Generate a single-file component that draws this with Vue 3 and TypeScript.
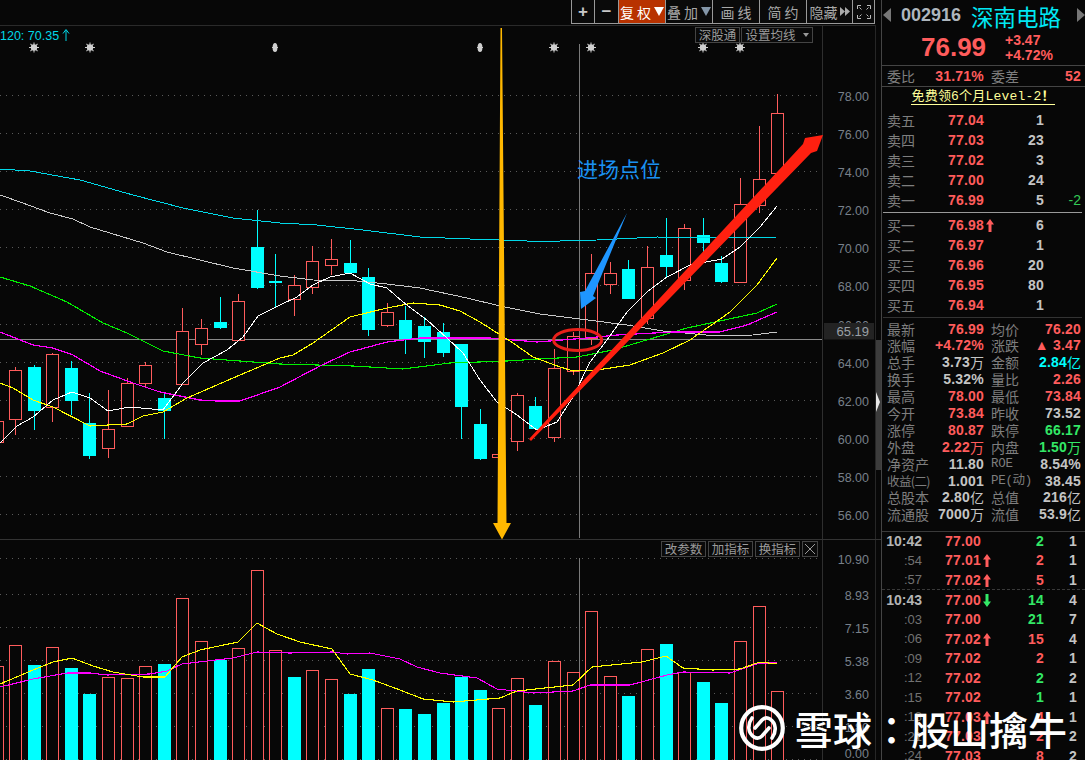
<script setup lang="ts">
type Candle = [number, number, number, number, number, number];
type Bar = [number, number, number];

const candles: Candle[] = [
  [-2.5, 421, 442, 415, 450, 1], [15.5, 370, 419, 367, 435, 1], [34.5, 367, 411, 365, 430, 0],
  [52.5, 354, 407, 353, 422, 1], [71.5, 368, 401, 361, 415, 0], [89.5, 423, 456, 393, 459, 0],
  [108.5, 429, 448, 390, 458, 1], [127.5, 383, 426, 378, 426, 1], [145.5, 365, 383, 362, 388, 1],
  [164.5, 398, 411, 392, 439, 0], [182.5, 331, 384, 308, 384, 1], [201.5, 328, 344, 319, 355, 1],
  [220.5, 322, 328, 297, 329, 0], [238.5, 301, 340, 294, 340, 1], [257.5, 247, 288, 210, 289, 0],
  [275.5, 281, 283, 254, 307, 0], [294.5, 285, 299, 275, 316, 1], [312.5, 261, 287, 246, 294, 1],
  [331.5, 259, 265, 239, 275, 1], [350.5, 263, 273, 240, 273, 0], [368.5, 277, 330, 268, 336, 0],
  [387.5, 312, 325, 303, 327, 1], [405.5, 320, 339, 306, 354, 0], [424.5, 326, 342, 317, 358, 0],
  [443.5, 332, 353, 323, 357, 0], [461.5, 344, 407, 344, 439, 0], [480.5, 424, 459, 409, 460, 0],
  [498.5, 454, 457, 454, 457, 1], [517.5, 395, 441, 393, 451, 1], [535.5, 406, 429, 397, 429, 0],
  [554.5, 368, 437, 349, 442, 1], [573.5, 336, 371, 332, 375, 1], [591.5, 273, 338, 254, 345, 1],
  [610.5, 273, 284, 262, 294, 1], [628.5, 269, 299, 260, 299, 0], [647.5, 267, 318, 246, 324, 1],
  [666.5, 255, 267, 218, 277, 0], [684.5, 228, 280, 224, 290, 1], [703.5, 235, 243, 218, 253, 0],
  [721.5, 263, 282, 256, 283, 0], [740.5, 204, 282, 178, 282, 1], [759.5, 179, 205, 126, 213, 1],
  [777.5, 113, 173, 94, 173, 1],
];

const bars: Bar[] = [
  [-2.5, 666, 1], [15.5, 645, 1], [34.5, 665, 0], [52.5, 647, 1], [71.5, 668, 0], [89.5, 694, 0],
  [108.5, 677, 1], [127.5, 678, 1], [145.5, 666, 1], [164.5, 664, 0], [182.5, 598, 1], [201.5, 641, 1],
  [220.5, 660, 0], [238.5, 648, 1], [257.5, 570, 1], [275.5, 650, 1], [294.5, 677, 0], [312.5, 670, 1],
  [331.5, 679, 1], [350.5, 694, 0], [368.5, 669, 0], [387.5, 708, 1], [405.5, 709, 0], [424.5, 714, 0],
  [443.5, 703, 0], [461.5, 677, 0], [480.5, 690, 0], [498.5, 708, 1], [517.5, 678, 1], [535.5, 705, 0],
  [554.5, 661, 1], [573.5, 672, 1], [591.5, 611, 1], [610.5, 676, 1], [628.5, 696, 0], [647.5, 649, 1],
  [666.5, 644, 0], [684.5, 672, 1], [703.5, 682, 0], [721.5, 703, 0], [740.5, 641, 1], [759.5, 606, 1],
  [777.5, 691, 1],
];

const mainLines = [
  { color: '#00d8e8', w: 1, pts: '0,169 30,171 80,180 133,195 183,208 233,218 280,223 317,225 363,230 420,237 470,239 527,241 560,241 597,240 657,237 717,238 777,237' },
  { color: '#c8c8c8', w: 1, pts: '0,195 20,202 50,213 73,219 90,227 143,243 167,252 200,260 233,268 280,276 313,280 357,281 387,284 420,288 467,298 500,306 540,314 580,319 627,325 663,331 717,336 753,335 777,332' },
  { color: '#00f000', w: 1.1, pts: '0,277 30,286 67,302 103,323 127,333 163,351 200,358 280,364 353,366 403,369 450,363 507,361 540,359 577,357 613,350 687,328 757,313 777,304' },
  { color: '#ff00ff', w: 1.2, pts: '0,332 33,345 53,348 73,355 100,371 133,383 160,392 200,400 217,401 240,401 280,387 320,366 350,352 387,342 420,338 490,338 537,342 587,338 617,335 673,332 720,332 747,325 777,312' },
  { color: '#ffff00', w: 1.1, pts: '0,383 13,388 33,400 53,407 90,426 127,424 143,416 163,412 187,398 233,378 280,358 293,355 313,343 350,317 387,308 413,303 440,305 460,311 480,322 513,343 533,357 560,367 573,371 597,370 630,365 663,353 690,340 730,312 757,285 777,258' },
  { color: '#ffffff', w: 1, pts: '0,443 17,426 33,417 53,400 72,392 90,398 108,411 130,407 163,410 183,383 203,363 227,350 243,337 258,316 280,305 297,297 313,285 330,277 350,273 370,284 387,288 403,302 427,320 447,338 463,353 480,380 497,402 517,415 537,430 557,422 573,397 590,362 607,340 627,312 647,292 667,277 690,265 722,259 740,247 760,227 777,206' },
];

const volLines = [
  { color: '#ff00ff', pts: '0,687 33,679 67,673 90,673 107,675 150,674 167,671 182,664 207,661 233,658 257,652 290,653 333,652 347,654 370,653 400,659 417,667 440,673 477,678 497,689 533,693 573,691 590,685 630,685 667,675 683,672 730,673 760,663 777,663' },
  { color: '#ffff00', pts: '0,684 33,670 53,662 72,658 93,666 113,672 143,677 165,677 182,657 200,650 238,642 257,623 277,634 300,642 332,649 350,674 373,680 400,690 423,699 453,702 500,698 517,691 573,685 592,667 642,662 666,656 683,668 713,670 740,669 760,662 777,664' },
];

const mainGrid = [95, 133, 171, 209, 247, 285, 324, 362, 400, 438, 476, 514];
const mainLabels: [string, number][] = [
  ['78.00', 97], ['76.00', 135], ['74.00', 173], ['72.00', 211], ['70.00', 249], ['68.00', 287],
  ['66.00', 326], ['64.00', 364], ['62.00', 402], ['60.00', 440], ['58.00', 478], ['56.00', 516],
];
const volGrid = [558, 594, 627, 660, 693, 726, 759];
const volLabels: [string, number][] = [
  ['10.90', 560], ['8.93', 596], ['7.15', 629], ['5.38', 662], ['3.60', 695], ['1.80', 728], ['0.00', 754],
];
const stars: [number, boolean][] = [[34, false], [90, false], [275, true], [480, true], [554, false], [591, false], [703, false], [740, false]];
const rays = [0, 45, 90, 135, 180, 225, 270, 315];

const sells = [
  { l: '卖五', p: '77.04', v: '1' }, { l: '卖四', p: '77.03', v: '23' }, { l: '卖三', p: '77.02', v: '3' },
  { l: '卖二', p: '77.00', v: '24' }, { l: '卖一', p: '76.99', v: '5', d: '-2' },
];
const buys = [
  { l: '买一', p: '76.98', v: '6', up: true }, { l: '买二', p: '76.97', v: '1' }, { l: '买三', p: '76.96', v: '20' },
  { l: '买四', p: '76.95', v: '80' }, { l: '买五', p: '76.94', v: '1' },
];
type Cell = { l: string; v: string; u?: string; c: string; latin?: boolean; tight?: boolean };
const stats: [Cell, Cell][] = [
  [{ l: '最新', v: '76.99', c: 'r' }, { l: '均价', v: '76.20', c: 'r' }],
  [{ l: '涨幅', v: '+4.72%', c: 'r' }, { l: '涨跌', v: '▲ 3.47', c: 'r' }],
  [{ l: '总手', v: '3.73', u: '万', c: 'g' }, { l: '金额', v: '2.84', u: '亿', c: 'c' }],
  [{ l: '换手', v: '5.32%', c: 'g' }, { l: '量比', v: '2.26', c: 'r' }],
  [{ l: '最高', v: '78.00', c: 'r' }, { l: '最低', v: '73.84', c: 'r' }],
  [{ l: '今开', v: '73.84', c: 'r' }, { l: '昨收', v: '73.52', c: 'g' }],
  [{ l: '涨停', v: '80.87', c: 'r' }, { l: '跌停', v: '66.17', c: 'n' }],
  [{ l: '外盘', v: '2.22', u: '万', c: 'r' }, { l: '内盘', v: '1.50', u: '万', c: 'n' }],
  [{ l: '净资产', v: '11.80', c: 'g' }, { l: 'ROE', v: '8.54%', c: 'g', latin: true }],
  [{ l: '收益(二)', v: '1.001', c: 'g', tight: true }, { l: 'PE(动)', v: '38.45', c: 'g', latin: true }],
  [{ l: '总股本', v: '2.80', u: '亿', c: 'g' }, { l: '总值', v: '216', u: '亿', c: 'g' }],
  [{ l: '流通股', v: '7000', u: '万', c: 'g' }, { l: '流值', v: '53.9', u: '亿', c: 'g' }],
];
type Trade = { t: string; full?: boolean; p: string; a?: 'u' | 'd'; v: string; vc: string; n: string; sep?: boolean };
const trades: Trade[] = [
  { t: '10:42', full: true, p: '77.00', v: '2', vc: 'n', n: '1' },
  { t: ':54', p: '77.01', a: 'u', v: '2', vc: 'r', n: '1' },
  { t: ':57', p: '77.02', a: 'u', v: '5', vc: 'r', n: '1', sep: true },
  { t: '10:43', full: true, p: '77.00', a: 'd', v: '14', vc: 'n', n: '4' },
  { t: ':03', p: '77.00', v: '21', vc: 'n', n: '7' },
  { t: ':06', p: '77.02', a: 'u', v: '15', vc: 'r', n: '4' },
  { t: ':09', p: '77.02', v: '2', vc: 'r', n: '1' },
  { t: ':12', p: '77.02', v: '2', vc: 'n', n: '2' },
  { t: ':15', p: '77.02', v: '1', vc: 'n', n: '1' },
  { t: ':18', p: '77.03', a: 'u', v: '4', vc: 'r', n: '1' },
  { t: ':21', p: '77.03', v: '2', vc: 'r', n: '2' },
  { t: ':24', p: '77.03', v: '8', vc: 'r', n: '2' },
];
</script>

<template>
  <div class="screen">
    <section class="charts">
      <header class="toolbar">
        <div class="tools">
          <button class="tool w22 sym">+</button>
          <button class="tool w23 sym">−</button>
          <button class="tool w46 on">复 权<i class="tri white"></i></button>
          <button class="tool w46">叠 加<i class="tri steel"></i></button>
          <button class="tool w46">画 线</button>
          <button class="tool w46">简 约</button>
          <button class="tool w45">隐藏<svg class="ff" width="10" height="9" viewBox="0 0 10 9" fill="#aaa"><path d="M0 0L5 4.5L0 9ZM5 0L10 4.5L5 9Z" /></svg></button>
          <button class="tool w22 fs">
            <svg width="14" height="14" viewBox="0 0 14 14" fill="none" stroke="#bbb" stroke-width="1">
              <path d="M.5 4V.5H4M10 .5h3.5V4M13.5 10v3.5H10M4 13.5H.5V10" />
              <path d="M2.5 2.5l2 2M11.5 2.5l-2 2M11.5 11.5l-2-2M2.5 11.5l2-2" />
            </svg>
          </button>
        </div>
      </header>

      <div class="panel main">
        <svg class="plot" width="881" height="515" viewBox="0 25 881 515">
          <g shape-rendering="crispEdges">
            <line x1="0" x2="875" y1="25.5" y2="25.5" stroke="#2a2a2a" />
            <line v-for="y in mainGrid" :key="y" x1="0" x2="826" :y1="y + 0.5" :y2="y + 0.5" stroke="#5a5a5a" stroke-dasharray="1 5" />
            <line x1="822.5" x2="822.5" y1="25" y2="540" stroke="#2e2e2e" />
            <line x1="875.5" x2="875.5" y1="25" y2="540" stroke="#262626" />
            <rect x="876" y="340" width="5" height="130" fill="#3c3c3c" />
            <line x1="0" x2="822" y1="339.5" y2="339.5" stroke="#8a8a8a" />
            <line x1="579.5" x2="579.5" y1="44" y2="538" stroke="#7a7a7a" />
            <line x1="0" x2="881" y1="539.5" y2="539.5" stroke="#333" />
          </g>
          <g v-for="s in stars" :key="s[0]" :transform="`translate(${s[0]} 47.5)`" fill="#cfcfcf" stroke="#cfcfcf">
            <template v-if="s[1]">
              <ellipse rx="2.4" ry="4.6" stroke="none" />
              <line x1="-3" x2="3" stroke-width="1" />
            </template>
            <template v-else>
              <circle r="3.2" stroke="none" />
              <line v-for="a in rays" :key="a" x1="0" y1="0" x2="5" y2="0" stroke-width="1" :transform="`rotate(${a})`" />
            </template>
          </g>
          <g shape-rendering="crispEdges">
            <g v-for="c in candles" :key="c[0]">
              <template v-if="c[5]">
                <line :x1="c[0]" :x2="c[0]" :y1="c[3]" :y2="c[4]" stroke="#ff5c5c" />
                <rect :x="c[0] - 6" :y="c[1] + 0.5" width="12" :height="c[2] - c[1]" fill="#070707" stroke="#ff5c5c" />
              </template>
              <template v-else>
                <line :x1="c[0]" :x2="c[0]" :y1="c[3]" :y2="c[4]" stroke="#00ffff" />
                <rect :x="c[0] - 6.5" :y="c[1]" width="13" :height="Math.max(c[2] - c[1], 1)" fill="#00ffff" />
              </template>
            </g>
            <polyline v-for="l in mainLines" :key="l.color" :points="l.pts" fill="none" :stroke="l.color" :stroke-width="l.w" />
          </g>
          <polygon points="500.5,28 502,28 506.5,523 511,523 502,539.5 493,523 497.5,523" fill="#ffb800" />
          <polygon points="529,439 803,144 805,138 823,135 817,151 811,153 531,441" fill="#ff2010" />
          <ellipse cx="577.7" cy="340" rx="24" ry="10.5" fill="none" stroke="#e8201a" stroke-width="3" />
          <polygon points="627,213 585,291 580,292 581,309 596,298 593,296" fill="#1e96ff" />
          <text class="note" x="577" y="177">进场点位</text>
          <text v-for="l in mainLabels" :key="l[0]" class="axis" x="869" :y="l[1] + 3.5" text-anchor="end">{{ l[0] }}</text>
          <rect x="824" y="323" width="50" height="16.5" fill="#232323" />
          <text class="axis cur" x="869" y="336" text-anchor="end">65.19</text>
          <polygon points="876,392 880,402 876,412" fill="#e6e6e6" />
          <text class="ma" x="0" y="40">120: 70.35</text>
          <path d="M66 41V30M63 33.5L66 29.5 69 33.5" fill="none" stroke="#00d8e8" stroke-width="1" />
        </svg>
        <div class="chips top">
          <span class="chip c45">深股通</span>
          <span class="chip c72">设置均线<i class="dn"></i></span>
        </div>
      </div>

      <div class="panel vol">
        <svg class="plot" width="881" height="220" viewBox="0 540 881 220">
          <g shape-rendering="crispEdges">
            <line v-for="y in volGrid" :key="y" x1="0" x2="826" :y1="y + 0.5" :y2="y + 0.5" stroke="#5a5a5a" stroke-dasharray="1 5" />
            <line x1="822.5" x2="822.5" y1="540" y2="760" stroke="#2e2e2e" />
            <line x1="875.5" x2="875.5" y1="540" y2="760" stroke="#262626" />
            <line x1="579.5" x2="579.5" y1="558" y2="760" stroke="#7a7a7a" />
            <g v-for="b in bars" :key="b[0]">
              <rect v-if="b[2]" :x="b[0] - 6" :y="b[1] + 0.5" width="12" :height="770 - b[1]" fill="#070707" stroke="#ff5c5c" />
              <rect v-else :x="b[0] - 6.5" :y="b[1]" width="13" :height="770 - b[1]" fill="#00ffff" />
            </g>
            <polyline v-for="l in volLines" :key="l.color" :points="l.pts" fill="none" :stroke="l.color" stroke-width="1.1" />
          </g>
          <text v-for="l in volLabels" :key="l[0]" class="axis" x="869" :y="l[1] + 3.5" text-anchor="end">{{ l[0] }}</text>
        </svg>
        <div class="chips bottom">
          <span class="chip c45">改参数</span>
          <span class="chip c45">加指标</span>
          <span class="chip c45">换指标</span>
          <span class="chip c16">
            <svg width="10" height="10" viewBox="0 0 10 10" stroke="#999"><path d="M0 0L10 10M10 0L0 10" /></svg>
          </span>
        </div>
      </div>
    </section>

    <aside class="side">
      <div class="head">
        <i class="nav left"></i>
        <span class="code">002916</span>
        <span class="name">深南电路</span>
        <i class="nav right"></i>
      </div>
      <div class="quote">
        <span class="price">76.99</span>
        <div class="chg"><span>+3.47</span><span>+4.72%</span></div>
      </div>
      <div class="ratio">
        <div class="stat"><span class="lab">委比</span><b class="r">31.71%</b></div>
        <div class="stat"><span class="lab">委差</span><b class="r">52</b></div>
      </div>
      <div class="promo"><span>免费领6个月Level-2<b>！</b></span></div>

      <div class="book sell">
        <div v-for="o in sells" :key="o.l" class="order">
          <span class="lab">{{ o.l }}</span><b class="r">{{ o.p }}</b><b class="g num">{{ o.v }}</b>
          <span class="delta">{{ o.d }}</span>
        </div>
      </div>
      <div class="book buy">
        <div v-for="o in buys" :key="o.l" class="order">
          <span class="lab">{{ o.l }}</span>
          <b class="r pc">{{ o.p }}<svg v-if="o.up" class="ar" width="8" height="13" viewBox="0 0 8 12" preserveAspectRatio="none"><path d="M4 0L8 5H5.5V12H2.5V5H0Z" fill="#ff5c5c" /></svg></b>
          <b class="g num">{{ o.v }}</b>
          <span class="delta"></span>
        </div>
      </div>

      <div class="stats">
        <div v-for="row in stats" :key="row[0].l" class="stat-row">
          <div v-for="cell in row" :key="cell.l" class="stat">
            <span class="lab" :class="{ latin: cell.latin, tight: cell.tight }">{{ cell.l }}</span>
            <span class="val" :class="cell.c"><b>{{ cell.v }}</b><span v-if="cell.u" class="unit">{{ cell.u }}</span></span>
          </div>
        </div>
      </div>

      <div class="trades">
        <div v-for="t in trades" :key="t.t" class="trade" :class="{ sep: t.sep }">
          <span class="time" :class="{ full: t.full }">{{ t.t }}</span>
          <b class="r tp">{{ t.p }}<svg v-if="t.a === 'u'" class="ar" width="8" height="13" viewBox="0 0 8 12" preserveAspectRatio="none"><path d="M4 0L8 5H5.5V12H2.5V5H0Z" fill="#ff5c5c" /></svg><svg v-if="t.a === 'd'" class="ar" width="8" height="13" viewBox="0 0 8 12" preserveAspectRatio="none"><path d="M4 12L8 7H5.5V0H2.5V7H0Z" fill="#33e866" /></svg></b>
          <b class="num" :class="t.vc">{{ t.v }}</b>
          <b class="num g">{{ t.n }}</b>
        </div>
      </div>
    </aside>

    <div class="mark">
      <svg width="46" height="46" viewBox="0 0 46 46" fill="none" stroke="#fff" stroke-width="4.2" stroke-linecap="round">
        <circle cx="23" cy="23" r="20.8" />
        <path d="M13 13C8 20 9 28 15 32C18 34 21 33 23 31L30 23" stroke-width="3.6" />
        <path d="M33 33C38 26 37 18 31 14C28 12 25 13 23 15L16 23" stroke-width="3.6" />
      </svg>
      <span>雪球：股山擒牛</span>
    </div>
  </div>
</template>

<style scoped>
.screen {
  position: relative;
  display: flex;
  width: 1085px;
  height: 760px;
  overflow: hidden;
  background: #070707;
  color: #c4c4c4;
  font-family: "Liberation Sans", "Noto Sans CJK SC", sans-serif;
}
.charts {
  display: flex;
  flex-direction: column;
  width: 881px;
  flex: none;
}
.toolbar {
  display: flex;
  justify-content: flex-end;
  height: 25px;
  padding-right: 6px;
  box-sizing: border-box;
  flex: none;
}
.tools {
  display: flex;
  height: 24px;
  box-sizing: border-box;
  border: 1px solid #999;
  border-top: 0;
}
.tool {
  display: flex;
  align-items: center;
  justify-content: center;
  height: 23px;
  padding: 0;
  border: 0;
  border-left: 1px solid #999;
  background: #0a0a0a;
  color: #a8a8a8;
  font: 14px "Noto Sans CJK SC", sans-serif;
  box-sizing: border-box;
}
.tool:first-child { border-left: 0; }
.w22 { width: 22px; }
.w23 { width: 24px; }
.w46 { width: 47px; }
.w45 { width: 46px; }
.sym { font: bold 17px "Liberation Sans", sans-serif; color: #c8c8c8; }
.on { background: #b83200; color: #fff; }
.tri {
  width: 0;
  height: 0;
  margin-left: 3px;
  border-left: 5px solid transparent;
  border-right: 5px solid transparent;
  border-top: 9px solid #fff;
}
.tri.steel { border-top-color: #8496a8; }
.ff { margin-left: 2px; flex: none; }
.panel {
  position: relative;
  flex: none;
}
.panel.main { height: 515px; }
.panel.vol { height: 220px; }
.plot { display: block; overflow: visible; }
.axis {
  font: 12.5px "Liberation Sans", sans-serif;
  fill: #78808a;
}
.axis.cur { fill: #9aa0a6; font-size: 13px; }
.ma {
  font: 12.5px "Liberation Sans", sans-serif;
  fill: #00d8e8;
}
.note {
  font: 21px "Noto Sans CJK SC", sans-serif;
  fill: #1a92f2;
}
.chips {
  position: absolute;
  display: flex;
  gap: 2px;
}
.chips.top { left: 695px; top: 2px; gap: 1px; }
.chips.bottom { left: 661px; top: 1px; }
.chip {
  display: flex;
  align-items: center;
  justify-content: center;
  height: 16px;
  box-sizing: border-box;
  border: 1px solid #444;
  background: #0a0a0a;
  color: #9a9a9a;
  font: 12.5px "Noto Sans CJK SC", sans-serif;
  line-height: 14px;
}
.c45 { width: 45px; }
.c72 { width: 72px; }
.c16 { width: 16px; }
.dn {
  margin-left: 7px;
  border-left: 3px solid transparent;
  border-right: 3px solid transparent;
  border-top: 4px solid #999;
}

.side {
  position: relative;
  display: flex;
  flex-direction: column;
  width: 204px;
  flex: none;
  box-sizing: border-box;
  border-left: 1px solid #444;
}
.r { color: #ff5c5c; }
.g { color: #c4c4c4; }
.n { color: #33e866; }
.c { color: #00ffff; }
b { font-size: 14px; font-weight: 700; letter-spacing: 0.2px; }
.lab {
  color: #7e7e7e;
  font: 14px/16px "Noto Sans CJK SC", sans-serif;
  white-space: nowrap;
}
.latin { font: 12.5px/16px "Liberation Mono", "Noto Sans CJK SC", monospace; letter-spacing: -0.3px; }
.tight { font-size: 12.5px; letter-spacing: -0.6px; }
.head {
  position: relative;
  display: flex;
  align-items: center;
  height: 31px;
  flex: none;
  padding-left: 19px;
  box-sizing: border-box;
}
.code { font-size: 18px; font-weight: 700; color: #aeb6bd; }
.name { margin-left: 10px; font: 22.5px "Noto Sans CJK SC", sans-serif; color: #00e8f4; line-height: 30px; }
.nav {
  position: absolute;
  top: 8px;
  border-top: 7px solid transparent;
  border-bottom: 7px solid transparent;
}
.nav.left { left: 1px; border-right: 8px solid #777; }
.nav.right { right: 0; border-left: 8px solid #777; }
.quote {
  display: flex;
  align-items: center;
  height: 35px;
  flex: none;
  box-sizing: border-box;
  padding-left: 39px;
  border-bottom: 1px solid #444;
}
.price { width: 84px; font-size: 26px; font-weight: 700; color: #ff5c5c; margin-top: -2px; }
.chg { display: flex; flex-direction: column; color: #ff5c5c; font-size: 14px; font-weight: 700; line-height: 15px; letter-spacing: 0; margin-top: -1px; }
.ratio {
  display: grid;
  grid-template-columns: 97px 90px;
  column-gap: 7px;
  align-items: center;
  height: 21px;
  flex: none;
  box-sizing: border-box;
  padding-left: 5px;
  border-bottom: 1px solid #444;
}
.promo {
  display: flex;
  justify-content: center;
  align-items: center;
  height: 20px;
  flex: none;
  padding-right: 1px;
}
.promo span {
  color: #ffff9a;
  font: 13px/15px "Liberation Mono", "Noto Sans CJK SC", monospace;
  letter-spacing: 0.2px;
  border-bottom: 1px solid #ffff9a;
}
.promo b { font-size: 13px; letter-spacing: 0; }
.book { flex: none; margin-right: 3px; box-sizing: border-box; }
.book.sell { padding-top: 3px; padding-bottom: 2px; border-bottom: 1px solid #999; margin-left: 1px; padding-left: 4px; height: 106px; }
.book.buy { padding-top: 2px; border-bottom: 1px solid #333; margin-left: 1px; padding-left: 4px; height: 105px; }
.order {
  display: grid;
  grid-template-columns: 61px 46px 50px 37px;
  align-items: center;
  height: 20px;
}
.pc { position: relative; white-space: nowrap; }
.order .ar, .trade .ar { margin-left: 2px; vertical-align: -2px; }
.num { text-align: right; }
.delta { text-align: right; color: #33c855; font-size: 14px; }
.stats { flex: none; padding: 2px 0 0 5px; height: 214px; box-sizing: border-box; border-bottom: 1px solid #3a3a3a; }
.stat-row {
  display: grid;
  grid-template-columns: 97px 90px;
  column-gap: 7px;
  height: 16.9px;
}
.stat { display: flex; justify-content: space-between; align-items: center; height: 17px; }
.val { white-space: nowrap; display: flex; align-items: center; }
.unit { font: 14px/16px "Noto Sans CJK SC", sans-serif; }
.trades { flex: none; margin-top: -1px; }
.trade {
  display: grid;
  grid-template-columns: 40px 72px 50px 33px;
  align-items: center;
  height: 19.5px;
  box-sizing: border-box;
}
.trade.sep { border-bottom: 1px dashed #3a3a3a; height: 20px; }
.time { text-align: right; color: #727272; font-size: 13px; }
.time.full { color: #b4b4b4; font-size: 14px; font-weight: 700; }
.tp { padding-left: 23px; white-space: nowrap; }
.mark {
  position: absolute;
  left: 739px;
  top: 705px;
  display: flex;
  align-items: center;
  gap: 9px;
  height: 46px;
  color: #fff;
  font: 500 39px/46px "Noto Sans CJK TC", sans-serif;
  white-space: nowrap;
}
</style>
<style>
html, body { background: #070707; }
</style>
